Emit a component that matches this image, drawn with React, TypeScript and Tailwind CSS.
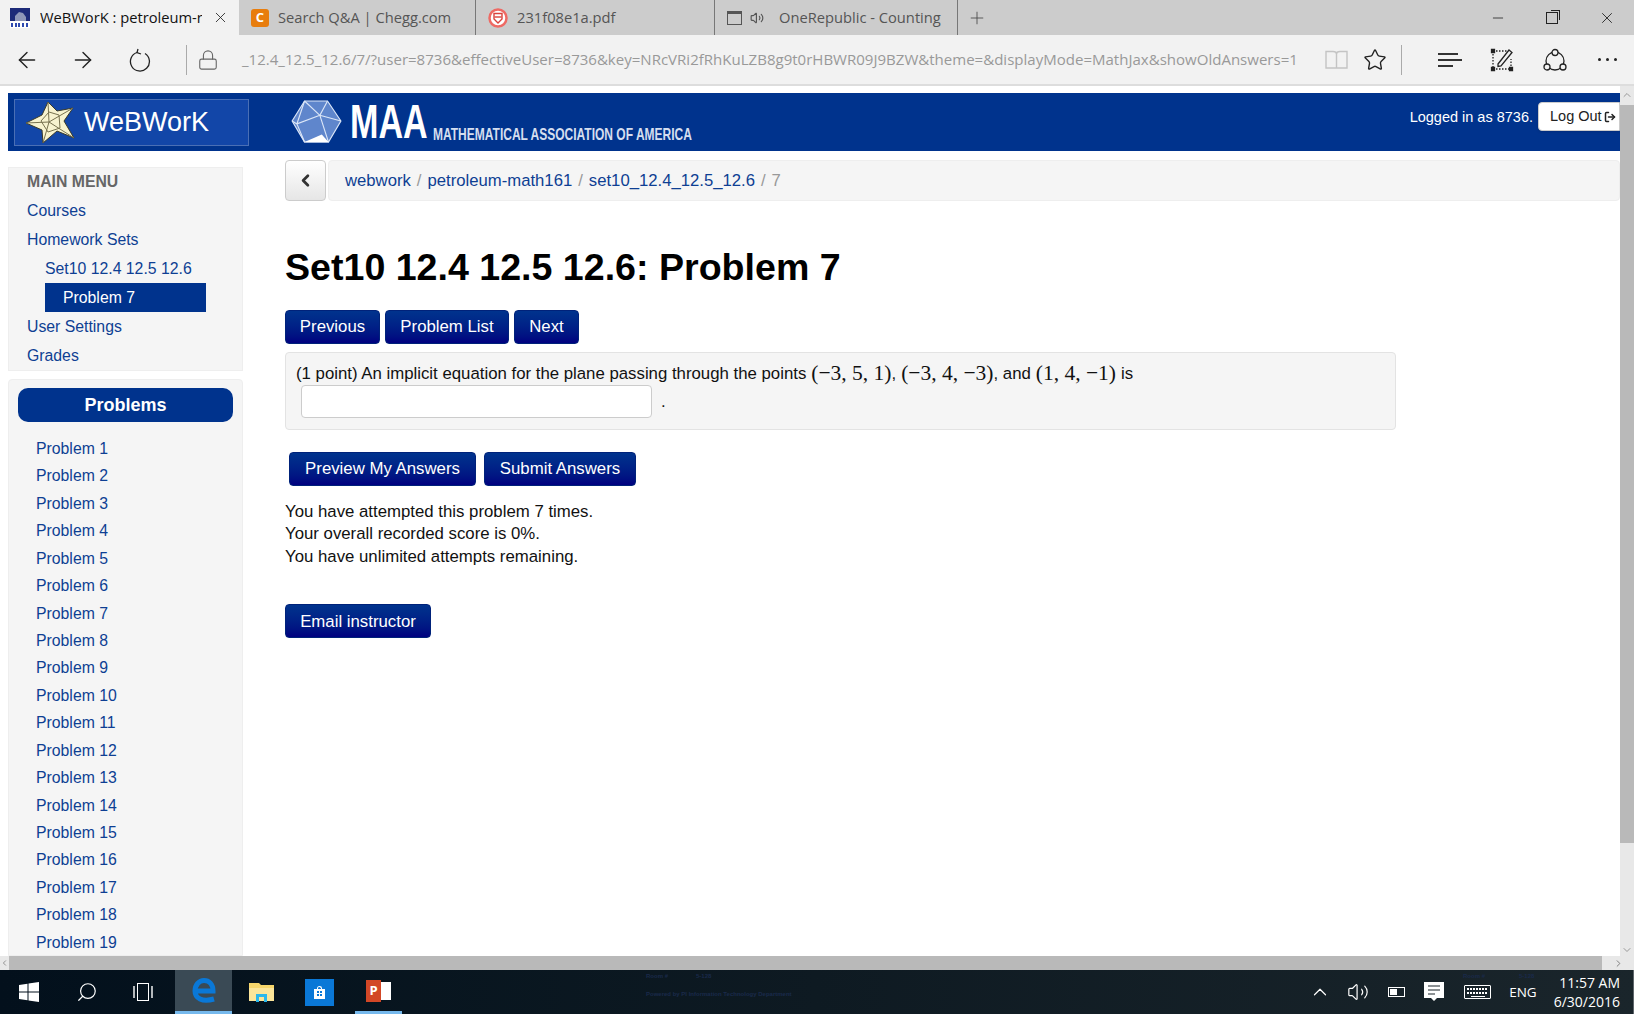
import { ArrowLeft, ArrowRight, ChevronLeft, ChevronRight, ChevronUp, ChevronDown, Lock, LogOut, Minus, Plus, Star, Volume2, X, Search } from 'lucide-react'

const problems = Array.from({ length: 19 }, (_, i) => `Problem ${i + 1}`)

function WebworkStar() {
  return (
    <svg width="52" height="42" viewBox="0 0 52 42">
      <path d="M2 22 L18 14 L24 1 L33 10 L49 7 L40 20 L50 37 L33 30 L19 42 L18 29 Z" fill="#f7f3cf" stroke="#3a3a2a" strokeWidth="1" />
      <path d="M25 21 L24 1 M25 21 L49 7 M25 21 L50 37 M25 21 L19 42 M25 21 L2 22 M17 20 L25 11 L35 14 L36 27 L24 31 Z" fill="none" stroke="#77724f" strokeWidth="1" />
    </svg>
  )
}

function MaaLogo() {
  return (
    <svg width="54" height="44" viewBox="0 0 54 46">
      <path d="M14 1 L38 1 L52 22 L39 44 L14 44 L1 22 Z" fill="#5f86cc" stroke="#dbe6f7" strokeWidth="1.2" />
      <path d="M14 1 L30 16 L38 1 M30 16 L52 22 M30 16 L39 44 M30 16 L6 25 L14 44 M1 22 L6 25 M14 1 L6 25" fill="none" stroke="#dbe6f7" strokeWidth="1.2" />
      <path d="M14 44 L32 36 L39 44 Z" fill="#ffffff" />
    </svg>
  )
}

function NavButton({ label, className = '' }: { label: string; className?: string }) {
  return (
    <button className={`h-[34px] rounded-[4px] border border-[#00227a] bg-gradient-to-b from-[#00338d] to-[#00007f] text-[16.8px] text-white ${className}`}>
      {label}
    </button>
  )
}

function ChromeTab({ icon, label, width }: { icon: React.ReactNode; label: string; width: string }) {
  return (
    <div className={`flex h-full items-center gap-[9px] border-r border-[#777] pl-3 text-[14.7px] text-[#555] ${width}`}>
      {icon}
      <span className="whitespace-nowrap">{label}</span>
    </div>
  )
}

function Sidebar() {
  return (
    <aside className="flex w-[235px] shrink-0 flex-col gap-2">
      <div className="mt-[16px] h-[204px] border border-[#eeeeee] bg-[#f5f5f5] pl-[18px] text-[15.8px] leading-[29px] text-[#0e3f93]">
        <div className="-mt-[1px] font-bold text-[#666]">MAIN MENU</div>
        <div>Courses</div>
        <div>Homework Sets</div>
        <div className="pl-[18px]">Set10 12.4 12.5 12.6</div>
        <div className="ml-[18px] w-[161px] bg-[#00338d] pl-[18px] text-white">Problem 7</div>
        <div>User Settings</div>
        <div>Grades</div>
      </div>
      <div className="min-h-0 flex-1 overflow-hidden rounded-t-[4px] border border-[#eeeeee] bg-[#f5f5f5] px-[9px] pt-2">
        <div className="flex h-[34px] items-center justify-center rounded-[10px] bg-[#00338d] text-[18px] font-bold text-white">Problems</div>
        <ul className="mt-[13px] pl-[18px] text-[15.8px] text-[#0e3f93]">
          {problems.map((p) => (
            <li key={p} className="flex h-[27.45px] items-center">{p}</li>
          ))}
        </ul>
      </div>
    </aside>
  )
}

function ProblemBody() {
  return (
    <main className="ml-[42px] min-w-0 flex-1">
      <div className="mt-[9px] flex h-[41px] gap-[2px]">
        <div className="flex w-[41px] items-center justify-center rounded-[4px] border border-[#ccc] bg-gradient-to-b from-white to-[#e6e6e6]">
          <ChevronLeft size={19} strokeWidth={3.5} className="text-[#333]" />
        </div>
        <div className="flex flex-1 items-center rounded-[4px] border border-[#eeeeee] bg-[#f5f5f5] pl-[16px] text-[16.7px] text-[#999]">
          <span className="text-[#0e3f93]">webwork</span>
          <span className="mx-[6px]">/</span>
          <span className="text-[#0e3f93]">petroleum-math161</span>
          <span className="mx-[6px]">/</span>
          <span className="text-[#0e3f93]">set10_12.4_12.5_12.6</span>
          <span className="mx-[6px]">/</span>
          <span>7</span>
        </div>
      </div>
      <h1 className="mt-[46px] text-[37.6px] font-bold leading-[40px] text-black">Set10 12.4 12.5 12.6: Problem 7</h1>
      <div className="mt-[23px] flex gap-[5px]">
        <NavButton label="Previous" className="w-[95px]" />
        <NavButton label="Problem List" className="w-[124px]" />
        <NavButton label="Next" className="w-[65px]" />
      </div>
      <div className="mt-[8px] h-[78px] w-[1111px] rounded-[4px] border border-[#e3e3e3] bg-[#f5f5f5] pl-[10px] pt-[7px] text-[16.8px] text-[#111]">
        <div className="flex h-[27px] items-center gap-[5px] whitespace-nowrap">
          <span>(1 point) An implicit equation for the plane passing through the points</span>
          <span className="font-['Liberation_Serif'] text-[21.5px]">(−3, 5, 1)</span>
          <span className="-ml-[5px]">,</span>
          <span className="font-['Liberation_Serif'] text-[21.5px]">(−3, 4, −3)</span>
          <span className="-ml-[5px]">, and</span>
          <span className="font-['Liberation_Serif'] text-[21.5px]">(1, 4, −1)</span>
          <span>is</span>
        </div>
        <div className="ml-[5px] -mt-[2px] flex items-center gap-[9px]">
          <div className="h-[33px] w-[351px] rounded-[4px] border border-[#ccc] bg-white" />
          <span>.</span>
        </div>
      </div>
      <div className="ml-[4px] mt-[22px] flex gap-[8px]">
        <NavButton label="Preview My Answers" className="w-[187px]" />
        <NavButton label="Submit Answers" className="w-[152px]" />
      </div>
      <div className="mt-[15px] text-[16.8px] leading-[22.4px] text-[#111]">
        <p>You have attempted this problem 7 times.</p>
        <p>Your overall recorded score is 0%.</p>
        <p>You have unlimited attempts remaining.</p>
      </div>
      <NavButton label="Email instructor" className="mt-[36px] w-[146px]" />
    </main>
  )
}

export default function App() {
  return (
    <div className="flex h-[1014px] w-[1634px] flex-col overflow-hidden bg-white font-['Liberation_Sans',sans-serif]">
      {/* tabs */}
      <div className="flex h-[35px] shrink-0 items-center bg-[#cccccc] font-['Open_Sans',sans-serif]">
        <div className="flex h-full w-[239px] items-center bg-[#f2f2f2] pl-[10px] text-[14.7px] text-[#111]">
          <svg width="20" height="20" viewBox="0 0 20 20" className="mr-[10px] shrink-0">
            <rect width="20" height="20" fill="#fff" />
            <rect width="20" height="13" fill="#1d2a78" />
            <path d="M5 13 V8 L9 4 L13 5 L16 9 V13 Z" fill="#8f97b8" />
            <path d="M2 15 V19 M6 15 V19 M9 15 V19 M13 15 V19 M17 15 V19" stroke="#2f4ab0" strokeWidth="2" />
          </svg>
          <span className="w-[112px] flex-1 overflow-hidden whitespace-nowrap">WeBWorK : petroleum-r</span>
          <X size={17} strokeWidth={1.2} className="mx-[10px] shrink-0 text-[#222]" />
        </div>
        <ChromeTab width="w-[237px]" label="Search Q&A | Chegg.com" icon={<span className="flex h-[18px] w-[18px] items-center justify-center rounded-[3px] bg-[#e87d0d] text-[13px] font-bold text-white">C</span>} />
        <ChromeTab width="w-[239px]" label="231f08e1a.pdf" icon={
          <svg width="20" height="20" viewBox="0 0 20 20" fill="none">
            <circle cx="10" cy="10" r="8.5" fill="#fff" stroke="#ee6a64" strokeWidth="2.5" />
            <path d="M6 5.5 H14 V11 L10 15 L6 11 Z" stroke="#d9423c" strokeWidth="1.4" />
            <path d="M6.5 9 H13.5" stroke="#d9423c" strokeWidth="1.4" />
          </svg>
        } />
        <ChromeTab width="w-[243px]" label="OneRepublic - Counting" icon={<span className="flex items-center gap-2"><span className="h-[14px] w-[15px] border border-[#555] border-t-[3px]" /><Volume2 size={14} className="mr-[6px]" /></span>} />
        <Plus size={20} strokeWidth={1} className="ml-[9px] text-[#444]" />
        <div className="ml-auto flex items-center gap-[40px] pr-[18px] text-[#222]">
          <Minus size={16} strokeWidth={1.2} />
          <div className="relative h-[12px] w-[12px] border border-[#222]"><div className="absolute -right-[3px] -top-[3px] h-[10px] w-[9px] border-r border-t border-[#222]" /></div>
          <X size={18} strokeWidth={1.2} />
        </div>
      </div>
      {/* address bar */}
      <div className="flex h-[51px] shrink-0 items-center border-b-2 border-[#dddddd] bg-[#f2f2f2] font-['Open_Sans',sans-serif] text-[#222]">
        <ArrowLeft size={26} strokeWidth={1.3} className="ml-[14px]" />
        <ArrowRight size={26} strokeWidth={1.3} className="ml-[30px]" />
        <svg width="24" height="24" viewBox="0 0 24 24" fill="none" stroke="#222" strokeWidth="1.3" className="ml-[32px]">
          <path d="M9 4.5 A9.5 9.5 0 1 0 17 5.5" />
          <path d="M10 1 L9 4.5 L13 6" />
        </svg>
        <div className="ml-[34px] h-[30px] w-px bg-[#aaa]" />
        <Lock size={22} strokeWidth={1.2} className="ml-[10px] text-[#666]" />
        <div className="ml-[23px] w-[1058px] whitespace-nowrap text-[15.04px] text-[#999]">_12.4_12.5_12.6/7/?user=8736&amp;effectiveUser=8736&amp;key=NRcVRi2fRhKuLZB8g9t0rHBWR09J9BZW&amp;theme=&amp;displayMode=MathJax&amp;showOldAnswers=1</div>
        <svg width="23" height="20" viewBox="0 0 23 20" fill="none" stroke="#c4c4c4" strokeWidth="1.4" className="ml-[25px]">
          <path d="M1 1.5 H8 Q11.5 1.5 11.5 4 V18 H1 Z M22 1.5 H15 Q11.5 1.5 11.5 4 V18 H22 Z" />
        </svg>
        <Star size={24} strokeWidth={1.4} className="ml-[15px]" />
        <div className="ml-[14px] h-[30px] w-px bg-[#aaa]" />
        <div className="ml-[36px] flex w-[24px] flex-col gap-[4px]">
          <div className="h-[2px] w-[20px] bg-[#333]" />
          <div className="h-[2px] w-[24px] bg-[#333]" />
          <div className="h-[2px] w-[15px] bg-[#333]" />
        </div>
        <svg width="24" height="24" viewBox="0 0 24 24" className="ml-[28px]" fill="none" stroke="#222" strokeWidth="1.3">
          <path d="M3 3 H17 M3 3 V21 H21 V11" strokeDasharray="1.5 1.5" />
          <path d="M1.5 1.5 H4.5 V4.5 H1.5 Z M1.5 19.5 H4.5 V22.5 H1.5 Z M19.5 19.5 H22.5 V22.5 H19.5 Z" fill="#222" />
          <path d="M8 16 L19 2 L22 4.5 L11 18 L8 18.5 Z" />
        </svg>
        <svg width="24" height="24" viewBox="0 0 24 24" className="ml-[29px]" fill="none" stroke="#222" strokeWidth="1.3">
          <circle cx="12" cy="13" r="9" />
          <circle cx="12" cy="4.5" r="3" fill="#f2f2f2" />
          <circle cx="4" cy="19" r="3" fill="#f2f2f2" />
          <circle cx="20" cy="19" r="3" fill="#f2f2f2" />
        </svg>
        <div className="ml-[31px] flex gap-[5px]">
          <div className="h-[3px] w-[3px] rounded-full bg-[#222]" />
          <div className="h-[3px] w-[3px] rounded-full bg-[#222]" />
          <div className="h-[3px] w-[3px] rounded-full bg-[#222]" />
        </div>
      </div>
      {/* page */}
      <div className="flex min-h-0 flex-1">
        <div className="flex min-w-0 flex-1 flex-col pl-[8px] pt-[7px]">
          <header className="flex h-[58px] shrink-0 items-center bg-[#00338d] text-white">
            <div className="ml-[6px] flex h-[47px] w-[235px] shrink-0 items-center border border-[#4a6fb5] bg-[#1246a8] pl-[9px]">
              <WebworkStar />
              <span className="ml-[8px] text-[27px]">WeBWorK</span>
            </div>
            <div className="ml-[41px] shrink-0"><MaaLogo /></div>
            <span className="ml-[6px] w-[83px] origin-left scale-x-[0.71] text-[48px] font-bold leading-none">MAA</span>
            <span className="mt-[24px] w-[260px] origin-left scale-x-[0.706] whitespace-nowrap text-[17px] font-bold leading-none text-[#d5deef]">MATHEMATICAL ASSOCIATION OF AMERICA</span>
            <div className="ml-auto flex items-start self-start pt-[9px]">
              <span className="mt-[5px] text-[14.5px]">Logged in as 8736.</span>
              <div className="ml-[5px] flex h-[29px] w-[82px] items-center gap-[2px] rounded-l-[4px] border border-[#ccc] bg-white pl-[11px] text-[14.5px] text-[#222] shadow-sm">
                Log Out
                <LogOut size={12} strokeWidth={3} />
              </div>
            </div>
          </header>
          <div className="flex min-h-0 flex-1">
            <Sidebar />
            <ProblemBody />
          </div>
        </div>
        {/* vertical scrollbar */}
        <div className="flex w-[14px] shrink-0 flex-col items-center bg-[#e8e8e8] text-[#999]">
          <ChevronUp size={12} className="mt-[3px]" />
          <div className="mt-[4px] h-[738px] w-full bg-[#b9b9b9]" />
          <ChevronDown size={12} className="mt-auto" />
        </div>
      </div>
      {/* horizontal scrollbar */}
      <div className="flex h-[14px] shrink-0 items-center bg-[#b9b9b9] text-[#777]">
        <div className="flex h-full w-[9px] items-center justify-center bg-[#e8e8e8]"><ChevronLeft size={10} /></div>
        <div className="ml-auto flex h-full w-[32px] items-center justify-center bg-[#e8e8e8]"><ChevronRight size={11} /></div>
      </div>
      {/* taskbar */}
      <div className="relative flex h-[44px] shrink-0 items-center bg-gradient-to-r from-[#03101c] via-[#0e1a22] to-[#1a252b] font-['Open_Sans',sans-serif] text-white">
        {/* wallpaper text showing through the taskbar */}
        <div className="absolute left-[646px] top-[2px] flex gap-[28px] font-['Liberation_Sans'] text-[6px] font-bold text-[#1a2a4a]"><span>Room #</span><span>5-128</span></div>
        <div className="absolute left-[646px] top-[20px] font-['Liberation_Sans'] text-[6px] font-bold text-[#1a2a4a]">Powered by PI Information Technology Department</div>
        <div className="absolute left-[1463px] top-[2px] flex gap-[34px] font-['Liberation_Sans'] text-[6px] font-bold text-[#1a2a4a]"><span>Room #</span><span>5-128</span></div>
        <svg width="20" height="20" viewBox="0 0 20 20" className="ml-[19px]" fill="white">
          <path d="M0 3 L8.5 1.8 V9.5 H0 Z M9.5 1.6 L20 0 V9.5 H9.5 Z M0 10.5 H8.5 V18.2 L0 17 Z M9.5 10.5 H20 V20 L9.5 18.4 Z" />
        </svg>
        <Search size={22} strokeWidth={1.3} className="ml-[37px] -scale-x-100" />
        <div className="ml-[35px] flex items-center gap-[2px]">
          <div className="h-[12px] w-[2px] bg-white/70" />
          <div className="h-[18px] w-[12px] border border-white" />
          <div className="h-[12px] w-[2px] bg-white/70" />
        </div>
        <div className="ml-[22px] flex h-full w-[57px] items-center justify-center border-b-[3px] border-[#76b9ed] bg-[#3a4a55]">
          <svg width="24" height="25" viewBox="0 0 24 25" fill="none" stroke="#0a78d7" strokeWidth="5">
            <path d="M4 13 H21 C21 6 17 2.5 12 2.5 C7 2.5 3 7 3 13 C3 20 10 24.5 22 21" />
          </svg>
        </div>
        <svg width="25" height="20" viewBox="0 0 25 20" className="ml-[17px]">
          <path d="M0 1 H10 L12 3 H25 V19 H0 Z" fill="#f6d66b" />
          <path d="M0 6 H25 V19 H0 Z" fill="#fbe59a" />
          <path d="M7 20 V12 H18 V20 H15 V15 H10 V20 Z" fill="#2bb8ec" />
        </svg>
        <div className="ml-[31px] flex h-[27px] w-[29px] items-center justify-center bg-[#0a78d7]">
          <div className="relative mt-[3px] grid h-[10px] w-[11px] grid-cols-2 place-content-center gap-[1px] bg-white">
            <div className="absolute -top-[3px] left-[3px] h-[3px] w-[5px] rounded-t-[3px] border border-b-0 border-white" />
            <div className="h-[2px] w-[2px] justify-self-end bg-[#0a78d7]" />
            <div className="h-[2px] w-[2px] bg-[#0a78d7]" />
            <div className="h-[2px] w-[2px] justify-self-end bg-[#0a78d7]" />
            <div className="h-[2px] w-[2px] bg-[#0a78d7]" />
          </div>
        </div>
        <div className="ml-[21px] flex h-full w-[47px] items-center justify-center border-b-[3px] border-[#76b9ed]">
          <div className="relative flex h-[22px] w-[25px] items-center">
            <div className="absolute right-0 top-[2px] h-[18px] w-[15px] bg-white" />
            <div className="relative flex h-[22px] w-[15px] items-center justify-center bg-[#d24726] text-[13px] font-bold">P</div>
          </div>
        </div>
        <div className="relative ml-auto flex items-center">
          <ChevronUp size={22} strokeWidth={1.3} />
          <Volume2 size={22} strokeWidth={1.3} className="ml-[16px]" />
          <div className="ml-[19px] flex h-[10px] w-[17px] items-center border border-white p-[1px]"><div className="h-full w-[7px] bg-white" /></div>
          <svg width="20" height="20" viewBox="0 0 20 20" className="ml-[19px]">
            <path d="M0 0 H20 V16 H13 L10 19 L7 16 H0 Z" fill="#fff" />
            <path d="M4 4 H16 M4 8 H16 M4 12 H11" stroke="#1a252b" strokeWidth="1.2" />
          </svg>
          <div className="ml-[20px] flex h-[14px] w-[27px] flex-col justify-center gap-[2px] rounded-[1px] border border-white px-[2px]">
            <div className="h-[2px] w-full bg-[repeating-linear-gradient(90deg,#fff_0,#fff_2px,transparent_2px,transparent_3px)]" />
            <div className="h-[2px] w-full bg-[repeating-linear-gradient(90deg,#fff_0,#fff_2px,transparent_2px,transparent_3px)]" />
            <div className="mx-auto h-[1px] w-[14px] bg-white" />
          </div>
          <span className="ml-[18px] text-[13.5px]">ENG</span>
          <div className="ml-[17px] mr-[13px] text-right text-[14px] leading-[19px]">
            <div>11:57 AM</div>
            <div>6/30/2016</div>
          </div>
          <div className="h-[44px] w-px bg-white/30" />
        </div>
      </div>
    </div>
  )
}
